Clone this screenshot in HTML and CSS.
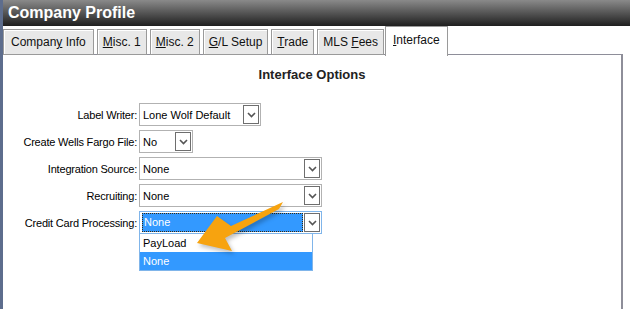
FILE: index.html
```html
<!DOCTYPE html>
<html lang="en">
<head>
  <meta charset="UTF-8" />
  <title>Company Profile</title>
  <link rel="stylesheet" href="styles.css">
</head>
<body>
  <div class="window">
    <div class="titlebar">Company Profile</div>
    <div class="tabs">
      <div class="tab first">Compan<u>y</u> Info</div>
      <div class="tab"><u>M</u>isc. 1</div>
      <div class="tab"><u>M</u>isc. 2</div>
      <div class="tab"><u>G</u>/L Setup</div>
      <div class="tab"><u>T</u>rade</div>
      <div class="tab">MLS <u>F</u>ees</div>
      <div class="tab active"><u>I</u>nterface</div>
    </div>
    <div class="panel">
      <h2>Interface Options</h2>
      <div class="form">
        <label>Label Writer:</label>
        <div class="select w-label">
          <span class="value">Lone Wolf Default</span>
          <span class="btn"><svg width="9" height="6" viewBox="0 0 9 6"><polyline points="1,1 4.5,4.5 8,1" fill="none" stroke="#555" stroke-width="1.6"/></svg></span>
        </div>

        <label>Create Wells Fargo File:</label>
        <div class="select w-small">
          <span class="value">No</span>
          <span class="btn"><svg width="9" height="6" viewBox="0 0 9 6"><polyline points="1,1 4.5,4.5 8,1" fill="none" stroke="#555" stroke-width="1.6"/></svg></span>
        </div>

        <label>Integration Source:</label>
        <div class="select w-wide">
          <span class="value">None</span>
          <span class="btn"><svg width="9" height="6" viewBox="0 0 9 6"><polyline points="1,1 4.5,4.5 8,1" fill="none" stroke="#555" stroke-width="1.6"/></svg></span>
        </div>

        <label>Recruiting:</label>
        <div class="select w-wide">
          <span class="value">None</span>
          <span class="btn"><svg width="9" height="6" viewBox="0 0 9 6"><polyline points="1,1 4.5,4.5 8,1" fill="none" stroke="#555" stroke-width="1.6"/></svg></span>
        </div>

        <label>Credit Card Processing:</label>
        <div class="select w-wide focused">
          <span class="value">None</span>
          <span class="btn"><svg width="9" height="6" viewBox="0 0 9 6"><polyline points="1,1 4.5,4.5 8,1" fill="none" stroke="#555" stroke-width="1.6"/></svg></span>
          <ul class="dropdown">
            <li>PayLoad</li>
            <li class="sel">None</li>
          </ul>
        </div>
      </div>
    </div>
    <svg class="pointer" width="630" height="309" viewBox="0 0 630 309">
      <polygon points="283,202 231,226 217,216 197,243 232,251 225,238 279,209" fill="#f7a30f"/>
    </svg>
  </div>
</body>
</html>
```

FILE: styles.css
```css
body {
  margin: 0;
  padding: 0;
  background: #fff;
  font-family: "Liberation Sans", Arial, sans-serif;
  overflow: hidden;
}
.window {
  position: relative;
  width: 630px;
  height: 309px;
  border-left: 3px solid #5d6d8d;
  box-sizing: border-box;
  overflow: hidden;
}
.titlebar {
  height: 26px;
  line-height: 26px;
  padding-left: 5px;
  background: linear-gradient(#8a8a8a, #1f1f1f);
  color: #fff;
  font-weight: bold;
  font-size: 16px;
}
.tabs {
  display: flex;
  align-items: flex-end;
  gap: 3px;
  height: 29px;
  background: #fff;
}
.tab {
  height: 26px;
  line-height: 25px;
  padding: 0 5px;
  box-sizing: border-box;
  border: 1px solid #9a9a9a;
  background: #e8e8e8;
  box-shadow: inset 1px 1px #fff;
  font-size: 12px;
  color: #111;
}
.tab.first {
  padding: 0 7px;
}
.tab.active {
  position: relative;
  z-index: 1;
  height: 30px;
  line-height: 26px;
  margin-left: -2px;
  margin-bottom: -1px;
  padding: 0 7px;
  background: #fff;
  border-bottom: none;
  box-shadow: none;
}
.panel {
  margin-top: -1px;
  width: 620px;
  height: 260px;
  border-top: 1px solid #8e8e99;
  border-right: 2px solid #8e8e99;
  box-sizing: border-box;
  background: #fff;
}
.panel h2 {
  margin: 0;
  padding-top: 12px;
  text-align: center;
  font-size: 13px;
  line-height: 16px;
  color: #222;
}
.form {
  display: grid;
  grid-template-columns: 134px auto;
  column-gap: 2px;
  row-gap: 4px;
  margin-top: 20px;
  justify-items: start;
  align-items: center;
}
.form label {
  justify-self: end;
  font-size: 11px;
  letter-spacing: -0.2px;
  color: #000;
}
.select {
  position: relative;
  display: flex;
  align-items: center;
  height: 23px;
  box-sizing: border-box;
  border: 1px solid #b2b2b2;
  background: #fff;
  font-size: 11px;
}
.select .value {
  flex: 1;
  padding-left: 3px;
}
.select .btn {
  display: flex;
  align-items: center;
  justify-content: center;
  width: 16px;
  height: 19px;
  margin-right: 1px;
  box-sizing: border-box;
  border: 1px solid #6e6e6e;
  background: #fff;
}
.w-label { width: 122px; }
.w-small { width: 54px; }
.w-wide { width: 183px; }
.select.focused {
  border-color: #80b5ea;
}
.select.focused .value {
  height: 19px;
  line-height: 17px;
  margin: 0 1px 0 2px;
  padding-left: 1px;
  box-sizing: border-box;
  border: 1px dotted #3a2a10;
  background: #3399ff;
  color: #fff;
}
.dropdown {
  position: absolute;
  left: -1px;
  top: 100%;
  width: 174px;
  margin: 0;
  padding: 0;
  list-style: none;
  box-sizing: border-box;
  border: 1px solid #80b5ea;
  background: #fff;
  z-index: 2;
}
.dropdown li {
  height: 18px;
  line-height: 18px;
  padding-left: 3px;
  font-size: 11px;
  color: #000;
}
.dropdown li.sel {
  background: #3399ff;
  color: #fff;
}
.pointer {
  position: absolute;
  left: -3px;
  top: 0;
  z-index: 3;
  filter: drop-shadow(2px 3px 2px rgba(0,0,0,0.25));
}
```
